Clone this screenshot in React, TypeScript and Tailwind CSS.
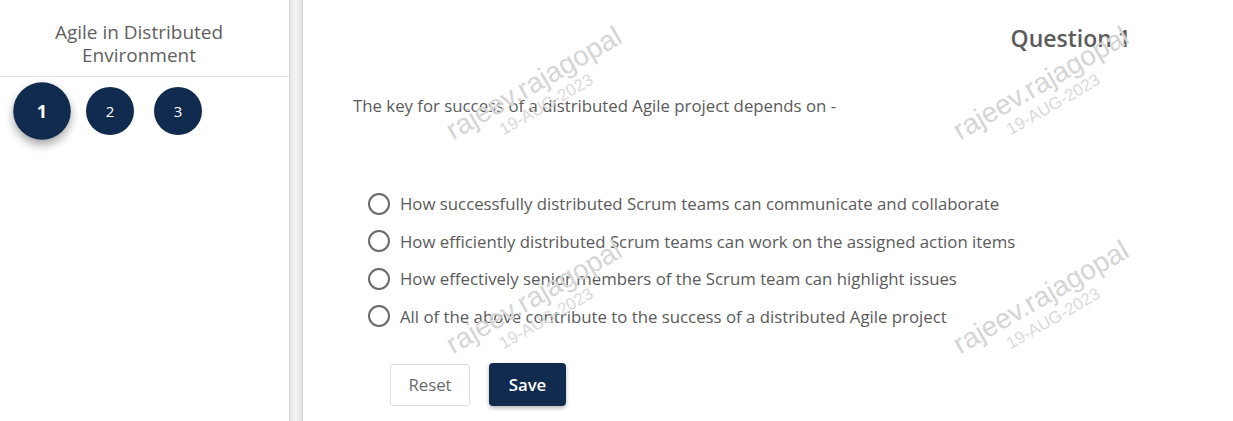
import React from 'react';

const options = [
  'How successfully distributed Scrum teams can communicate and collaborate',
  'How efficiently distributed Scrum teams can work on the assigned action items',
  'How effectively senior members of the Scrum team can highlight issues',
  'All of the above contribute to the success of a distributed Agile project',
];

// centres of the watermark stamps, relative to the clipped overlay
const marks = [
  { left: 236, top: 72 },
  { left: 743, top: 72 },
  { left: 236, top: 286 },
  { left: 743, top: 286 },
];

function Watermark({ left, top }: { left: number; top: number }) {
  return (
    <div
      className="absolute flex -translate-x-1/2 -translate-y-1/2 -rotate-30 flex-col items-center whitespace-nowrap text-[#d5d5d5] font-['Liberation_Sans',Arial,sans-serif]"
      style={{ left, top }}
    >
      <span className="text-[28px] leading-[30px]">rajeev.rajagopal</span>
      <span className="text-[17px] leading-[20px] text-[#dadada]">19-AUG-2023</span>
    </div>
  );
}

export default function App() {
  return (
    <div className="flex h-[421px] w-full overflow-hidden bg-white font-['Open_Sans',sans-serif] text-[#5a5a5a]">
      <aside className="w-[289px] shrink-0">
        <div className="border-b border-[#e2e2e2] pb-[9px] pr-[11px] pt-[21px] text-center text-[19px] leading-[23px] text-[#5f5f5f]">
          Agile in Distributed
          <br />
          Environment
        </div>
        <div className="mt-[10px] flex gap-[20px] pl-[18px]">
          <button className="flex h-12 w-12 scale-120 items-center justify-center rounded-full bg-[#112b4e] text-[15px] font-bold text-white shadow-[0_4px_8px_rgba(0,0,0,0.35)]">
            1
          </button>
          <button className="flex h-12 w-12 items-center justify-center rounded-full bg-[#112b4e] text-[15px] text-white">
            2
          </button>
          <button className="flex h-12 w-12 items-center justify-center rounded-full bg-[#112b4e] text-[15px] text-white">
            3
          </button>
        </div>
      </aside>

      <div className="w-[14px] shrink-0 border-x border-[#d4d4d4] bg-linear-to-r from-[#e6e6e6] via-[#f3f3f3] to-[#e4e4e4]" />

      <main className="relative flex-1 pl-[50px] pr-[102px]">
        <div className="flex justify-end pt-[23px]">
          <h2 className="text-[23px] font-semibold leading-[30px] text-[#5c5c5c]">Question 1</h2>
        </div>

        <p className="mt-[41px] text-[16.8px] leading-[24px]">
          The key for success of a distributed Agile project depends on -
        </p>

        <div className="mt-[67px] flex flex-col pl-[15px]">
          {options.map((o) => (
            <label key={o} className="flex h-[37.5px] items-center gap-[10px] text-[16.8px]">
              <span className="h-[22px] w-[22px] shrink-0 rounded-full border-2 border-[#6a6a6a]" />
              <span>{o}</span>
            </label>
          ))}
        </div>

        <div className="mt-[28px] flex items-center gap-[19px] pl-[37px]">
          <button className="h-[42px] w-[80px] rounded-[3px] border border-[#dedede] bg-white text-[16.8px] text-[#6a6a6a]">
            Reset
          </button>
          <button className="h-[43px] w-[77px] rounded-[4px] bg-[#112b4e] text-[16.8px] font-semibold text-white shadow-[0_2px_4px_rgba(0,0,0,0.3)]">
            Save
          </button>
        </div>

        <div className="pointer-events-none absolute inset-x-0 bottom-0 top-[20px] overflow-hidden">
          {marks.map((m, i) => (
            <Watermark key={i} left={m.left} top={m.top} />
          ))}
        </div>
      </main>
    </div>
  );
}
